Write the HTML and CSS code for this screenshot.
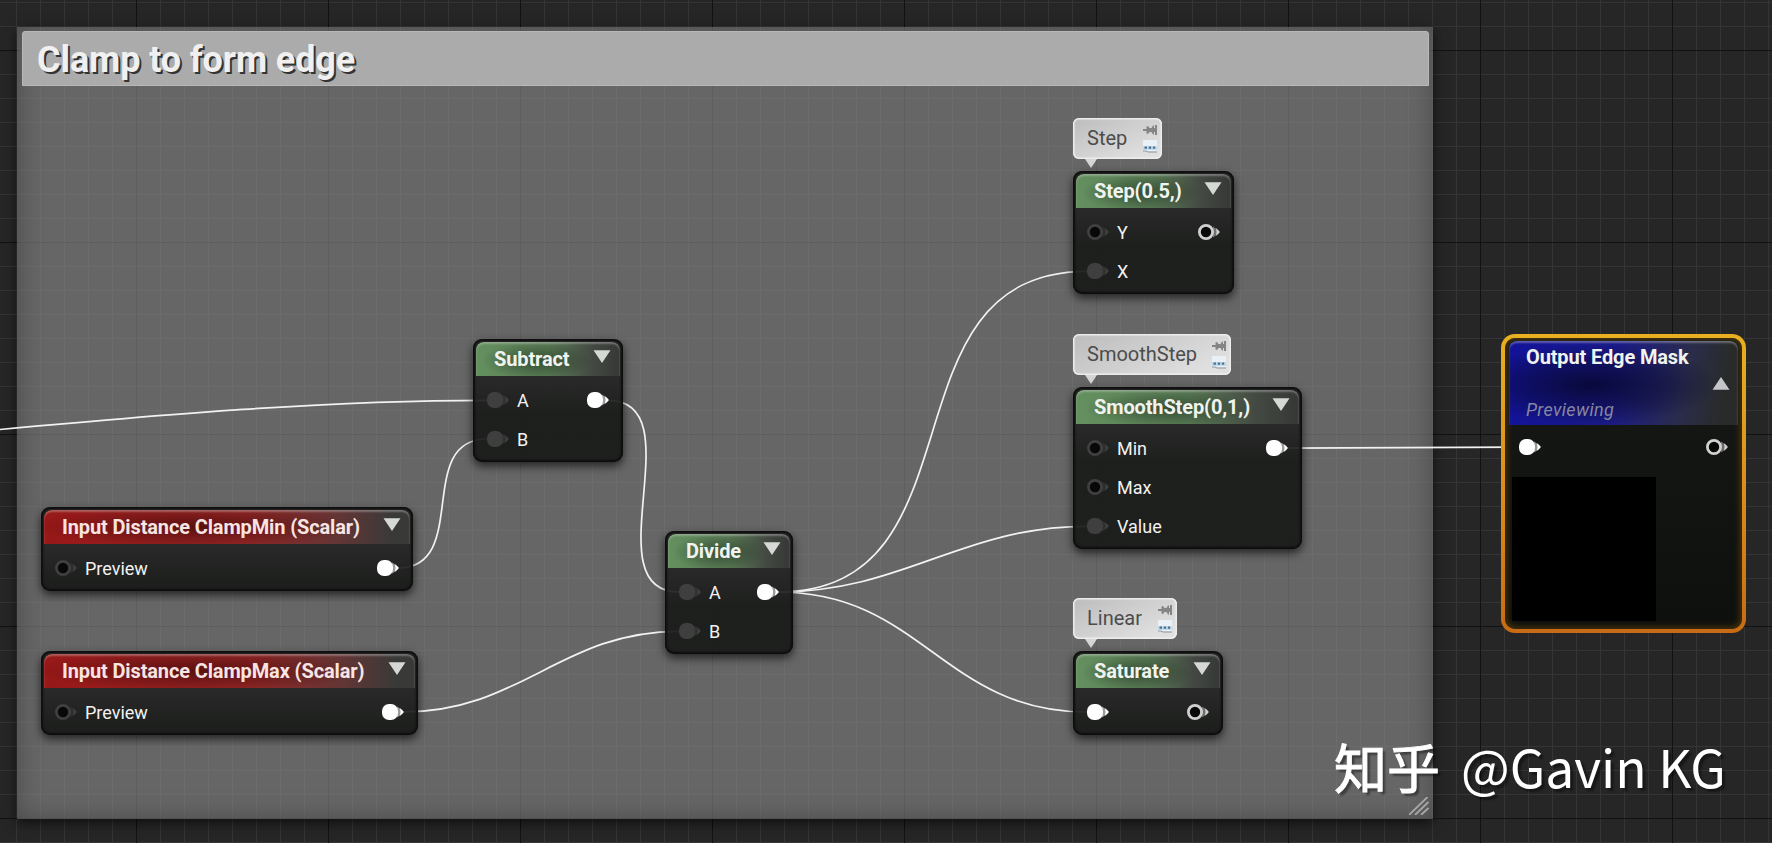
FILE: index.html
```
<!DOCTYPE html>
<html lang="en">
<head>
    <meta charset="UTF-8">
    <meta name="viewport" content="width=device-width, initial-scale=1.0">
    <title>Clamp to form edge</title>
    <link rel="stylesheet" href="styles.css">
</head>
<body>
    <!-- Shared icons -->
    <svg class="defs" width="0" height="0">
        <symbol id="pin-full" viewBox="0 0 22 16">
            <rect width="16" height="16" rx="7" fill="currentColor"/>
            <path d="M15 2.500Q19.500 5 21.800 8Q19.500 11 15 13.500z" fill="currentColor" opacity=".55"/>
            <path d="M18 4.200Q20.500 6 21.800 8Q20.500 10 18 11.800Q19 8 18 4.200z" fill="currentColor"/>
        </symbol>
        <symbol id="pin-empty" viewBox="0 0 22 16">
            <path d="M15 2.500Q19.500 5 21.800 8Q19.500 11 15 13.500z" fill="currentColor" opacity=".45"/>
            <circle cx="8" cy="8" r="6.6" fill="#080808" stroke="currentColor" stroke-width="2.800"/>
            <path d="M18 4.200Q20.500 6 21.800 8Q20.500 10 18 11.800Q19 8 18 4.200z" fill="currentColor"/>
        </symbol>
        <symbol id="arrow" viewBox="0 0 18 13">
            <path d="M.5 .3h17L9 13z" fill="currentColor"/>
        </symbol>
        <symbol id="pushpin" viewBox="0 0 14 12">
            <path d="M0 5h3.500V2.500L5 2l1.500 2h2L10 1.500h1V4h1V1h2v10h-2V8h-1v2.500h-1L8.500 8h-2L5 10l-1.500-.5V7H0z" fill="#858585"/>
        </symbol>
        <symbol id="bubble" viewBox="0 0 14 13">
            <path d="M0 0h14v11.500H0z" fill="#e9f1f7"/>
            <path d="M0 6h14v4H0z" fill="#c3dbea"/>
            <path d="M1.500 6.500h2.500v2.200H1.500zM5.700 6.500h2.500v2.200H5.700zM9.900 6.500h2.300v2.200H9.900z" fill="#4d7392"/>
            <path d="M0 11h3l2 1h9" stroke="#8b9298" stroke-width="1" fill="none"/>
        </symbol>
    </svg>

    <div class="graph">
        <section class="comment-box">
            <h1>Clamp to form edge</h1>
            <svg class="grip" viewBox="0 0 20 18">
                <path d="M0 18 18.500 0M6 18 19.500 5M12 18 19.500 11" stroke="#a8a8a8" stroke-width="1.800" fill="none"/>
            </svg>
        </section>

        <!-- Wires, drawn below the nodes -->
        <svg class="wires" viewBox="0 0 1772 843">
            <path d="M0 429.500C160 415 325 400.300 487 400.300"/>
            <path d="M398 568C470.700 568 414.300 439 487 439"/>
            <path d="M608 400.300C696 400.300 591 592 679 592"/>
            <path d="M403 712C521 712 561 631.300 679 631.300"/>
            <path d="M778 592C988 592 877 271.300 1087 271.300"/>
            <path d="M778 592C903 592 962 526.300 1087 526.300"/>
            <path d="M778 592C921 592 944 712 1087 712"/>
            <path d="M1287 448.200C1364 448.200 1442 447.200 1519 447.200"/>
        </svg>

        <article class="node red" id="clamp-min">
            <header><h2>Input Distance ClampMin (Scalar)</h2><svg class="arrow"><use href="#arrow"/></svg></header>
            <div class="row"><svg class="pin dim"><use href="#pin-empty"/></svg><span>Preview</span><svg class="pin out"><use href="#pin-full"/></svg></div>
        </article>

        <article class="node red" id="clamp-max">
            <header><h2>Input Distance ClampMax (Scalar)</h2><svg class="arrow"><use href="#arrow"/></svg></header>
            <div class="row"><svg class="pin dim"><use href="#pin-empty"/></svg><span>Preview</span><svg class="pin out"><use href="#pin-full"/></svg></div>
        </article>

        <article class="node" id="subtract">
            <header><h2>Subtract</h2><svg class="arrow"><use href="#arrow"/></svg></header>
            <div class="row"><svg class="pin dim"><use href="#pin-full"/></svg><span>A</span><svg class="pin out"><use href="#pin-full"/></svg></div>
            <div class="row"><svg class="pin dim"><use href="#pin-full"/></svg><span>B</span></div>
        </article>

        <article class="node" id="divide">
            <header><h2>Divide</h2><svg class="arrow"><use href="#arrow"/></svg></header>
            <div class="row"><svg class="pin dim"><use href="#pin-full"/></svg><span>A</span><svg class="pin out"><use href="#pin-full"/></svg></div>
            <div class="row"><svg class="pin dim"><use href="#pin-full"/></svg><span>B</span></div>
        </article>

        <div class="note" id="note-step">
            <span>Step</span>
            <div class="note-icons"><svg class="pushpin"><use href="#pushpin"/></svg><svg class="bubble"><use href="#bubble"/></svg></div>
        </div>
        <article class="node" id="step">
            <header><h2>Step(0.5,)</h2><svg class="arrow"><use href="#arrow"/></svg></header>
            <div class="row"><svg class="pin dim"><use href="#pin-empty"/></svg><span>Y</span><svg class="pin out hollow"><use href="#pin-empty"/></svg></div>
            <div class="row"><svg class="pin dim"><use href="#pin-full"/></svg><span>X</span></div>
        </article>

        <div class="note" id="note-smooth">
            <span>SmoothStep</span>
            <div class="note-icons"><svg class="pushpin"><use href="#pushpin"/></svg><svg class="bubble"><use href="#bubble"/></svg></div>
        </div>
        <article class="node" id="smoothstep">
            <header><h2>SmoothStep(0,1,)</h2><svg class="arrow"><use href="#arrow"/></svg></header>
            <div class="row"><svg class="pin dim"><use href="#pin-empty"/></svg><span>Min</span><svg class="pin out"><use href="#pin-full"/></svg></div>
            <div class="row"><svg class="pin dim"><use href="#pin-empty"/></svg><span>Max</span></div>
            <div class="row"><svg class="pin dim"><use href="#pin-full"/></svg><span>Value</span></div>
        </article>

        <div class="note" id="note-linear">
            <span>Linear</span>
            <div class="note-icons"><svg class="pushpin"><use href="#pushpin"/></svg><svg class="bubble"><use href="#bubble"/></svg></div>
        </div>
        <article class="node" id="saturate">
            <header><h2>Saturate</h2><svg class="arrow"><use href="#arrow"/></svg></header>
            <div class="row"><svg class="pin"><use href="#pin-full"/></svg><svg class="pin out hollow"><use href="#pin-empty"/></svg></div>
        </article>

        <div class="selection" id="output">
            <article class="output">
                <header>
                    <div class="titles">
                        <h2>Output Edge Mask</h2>
                        <p>Previewing</p>
                    </div>
                    <svg class="arrow up"><use href="#arrow"/></svg>
                </header>
                <div class="row"><svg class="pin"><use href="#pin-full"/></svg><svg class="pin out hollow"><use href="#pin-empty"/></svg></div>
                <div class="preview"></div>
            </article>
        </div>

        <div class="watermark"><span class="brand">知乎</span><span>@Gavin KG</span></div>
    </div>
</body>
</html>
```
FILE: styles.css
```
* {
    box-sizing: border-box;
}
body {
    margin: 0;
    font-family: Roboto, "Noto Sans CJK SC", sans-serif;
    background: #262626;
    overflow: hidden;
}
h1, h2, p {
    margin: 0;
}
svg {
    display: block;
    flex: none;
}
.defs {
    position: absolute;
}

/* Canvas with a 24px grid and a darker line every 192px */
.graph {
    position: relative;
    width: 1772px;
    height: 843px;
    overflow: hidden;
    background-color: #262626;
    background-image:
        linear-gradient(90deg, #121212 1px, transparent 1px),
        linear-gradient(#121212 1px, transparent 1px),
        linear-gradient(90deg, #353535 1px, transparent 1px),
        linear-gradient(#353535 1px, transparent 1px);
    background-size: 192px 192px, 192px 192px, 24px 24px, 24px 24px;
    background-position: 136px 0, 0 50px, 16px 0, 0 2px;
}

/* Comment region */
.comment-box {
    position: absolute;
    left: 17px;
    top: 27px;
    width: 1416px;
    height: 792px;
    padding: 4px 4px 0 5px;
    background: rgba(148, 148, 148, 0.59);
    box-shadow: inset 0 0 24px rgba(45, 45, 45, 0.5), 0 4px 12px rgba(0, 0, 0, 0.6);
}
.comment-box h1 {
    height: 55px;
    padding-left: 14px;
    background: #ababab;
    border: 1px solid #b8b8b8;
    border-radius: 3px 3px 0 0;
    color: #f0f0f0;
    font-size: 36px;
    font-weight: 700;
    letter-spacing: -0.1px;
    line-height: 57px;
    text-shadow: 2px 2px 0 #333;
}
.grip {
    position: absolute;
    right: 4px;
    bottom: 4px;
    width: 20px;
    height: 18px;
}
.wires {
    position: absolute;
    left: 0;
    top: 0;
    width: 1772px;
    height: 843px;
}
.wires path {
    fill: none;
    stroke: #f2f2f2;
    stroke-width: 1.7;
}

/* Nodes */
.node {
    position: absolute;
    padding-bottom: 4px;
    background: linear-gradient(rgba(34, 35, 34, 0.9) 37px, rgba(24, 26, 24, 0.93) 75px);
    border-radius: 9px;
    box-shadow: inset 0 0 2px 2px #0d0d0d, 0 4px 10px rgba(0, 0, 0, 0.65);
}
.node header {
    display: flex;
    justify-content: space-between;
    height: 34px;
    margin: 3px 3px 4px;
    padding: 0 9px 0 18px;
    border-radius: 8px 8px 0 0;
    box-shadow: inset 0 2px 2px rgba(220, 220, 220, 0.35);
    background:
        radial-gradient(ellipse 38% 55% at 42% 55%, rgba(28, 46, 28, 0.6), transparent),
        linear-gradient(90deg, #64905f, #5a7c56 50%, #444a43 80%, #363736);
}
.node.red header {
    background:
        radial-gradient(ellipse 45% 60% at 42% 50%, rgba(64, 8, 8, 0.7), transparent),
        linear-gradient(90deg, #981818, #942626 55%, #643535 80%, #393a38 95%);
}
h2 {
    color: #f0f3ee;
    font-size: 20px;
    font-weight: 700;
    letter-spacing: -0.13px;
    line-height: 34px;
    white-space: nowrap;
}
.node.red h2 {
    color: #f8e4e2;
}
.arrow {
    width: 18px;
    height: 13px;
    margin-top: 8px;
    color: #d5d8d4;
}
.row {
    display: flex;
    align-items: center;
    height: 39px;
    padding: 0 14px;
    color: #f2f2f2;
    font-size: 18px;
}
.row span {
    padding-top: 2px;
}
.pin {
    width: 22px;
    height: 16px;
    color: #fff;
}
.pin.dim {
    margin-right: 8px;
    color: #3e3f3e;
}
.pin.out {
    margin-left: auto;
}
.pin.hollow {
    color: #d0d0d0;
}

/* Node positions */
#clamp-min { left: 41px; top: 507px; width: 372px; }
#clamp-max { left: 41px; top: 651px; width: 377px; }
#subtract { left: 473px; top: 339px; width: 150px; }
#divide { left: 665px; top: 531px; width: 128px; }
#step { left: 1073px; top: 171px; width: 161px; }
#smoothstep { left: 1073px; top: 387px; width: 229px; }
#saturate { left: 1073px; top: 651px; width: 150px; }
#output { left: 1501px; top: 334px; width: 245px; }
#note-step { left: 1073px; top: 118px; width: 89px; }
#note-smooth { left: 1073px; top: 334px; width: 158px; }
#note-linear { left: 1073px; top: 598px; width: 104px; }

/* Comment bubbles above nodes */
.note {
    position: absolute;
    display: flex;
    justify-content: space-between;
    height: 41px;
    padding: 0 5px 0 14px;
    background: linear-gradient(155deg, #bcbcbc, #e0e0e0 85%);
    border-radius: 6px;
    box-shadow: inset 0 0 1px 1.500px #eee;
    color: #4c4c4c;
    font-size: 20px;
    line-height: 40px;
}
.note::after {
    content: "";
    position: absolute;
    left: 12px;
    top: 41px;
    border: 6px solid transparent;
    border-top: 9px solid #d5d5d5;
    border-bottom: 0;
}
.note-icons {
    display: flex;
    flex-direction: column;
    gap: 4px;
    padding-top: 6px;
}
.pushpin {
    width: 14px;
    height: 12px;
}
.bubble {
    width: 14px;
    height: 13px;
}

/* Selected output node */
.selection {
    position: absolute;
    height: 299px;
    padding: 4px;
    border-radius: 14px;
    background: linear-gradient(#e8b020, #d98c1a 55%, #c76b14);
}
.output {
    height: 291px;
    padding: 3px 4px 4px;
    border-radius: 10px;
    background: linear-gradient(#171917, #0e100d);
    box-shadow: inset 0 0 6px 2px #4b350c;
}
.output header {
    display: flex;
    justify-content: space-between;
    height: 84px;
    padding: 0 8px 0 17px;
    border-radius: 8px 8px 0 0;
    box-shadow: inset 0 2px 2px rgba(200, 205, 220, 0.4);
    background:
        radial-gradient(ellipse 55% 48% at 36% 52%, rgba(6, 6, 45, 0.85), rgba(6, 6, 45, 0.4) 60%, transparent),
        linear-gradient(100deg, #12129a, #1a1a88 45%, #2a2c4c 75%, #292b2a 92%);
}
.output h2 {
    height: 53px;
    line-height: 32px;
}
.output p {
    color: #8587a2;
    font-size: 18px;
    font-style: italic;
    letter-spacing: 0.35px;
    line-height: 32px;
}
.arrow.up {
    margin-top: 36px;
    color: #c4c6cb;
    transform: rotate(180deg);
}
.output .row {
    height: 44px;
    padding: 0 10px;
}
.preview {
    width: 144px;
    height: 144px;
    margin: 8px 0 0 3px;
    background: #000;
}

.watermark {
    position: absolute;
    left: 1334px;
    top: 728px;
    display: flex;
    gap: 21px;
    color: #fff;
    font-family: "Noto Sans CJK SC", sans-serif;
    font-size: 51.5px;
    line-height: 76px;
    white-space: nowrap;
    text-shadow: 3px 3px 2px rgba(0, 0, 0, 0.4);
}
.brand {
    font-size: 53px;
    -webkit-text-stroke: 1px #fff;
}
```
